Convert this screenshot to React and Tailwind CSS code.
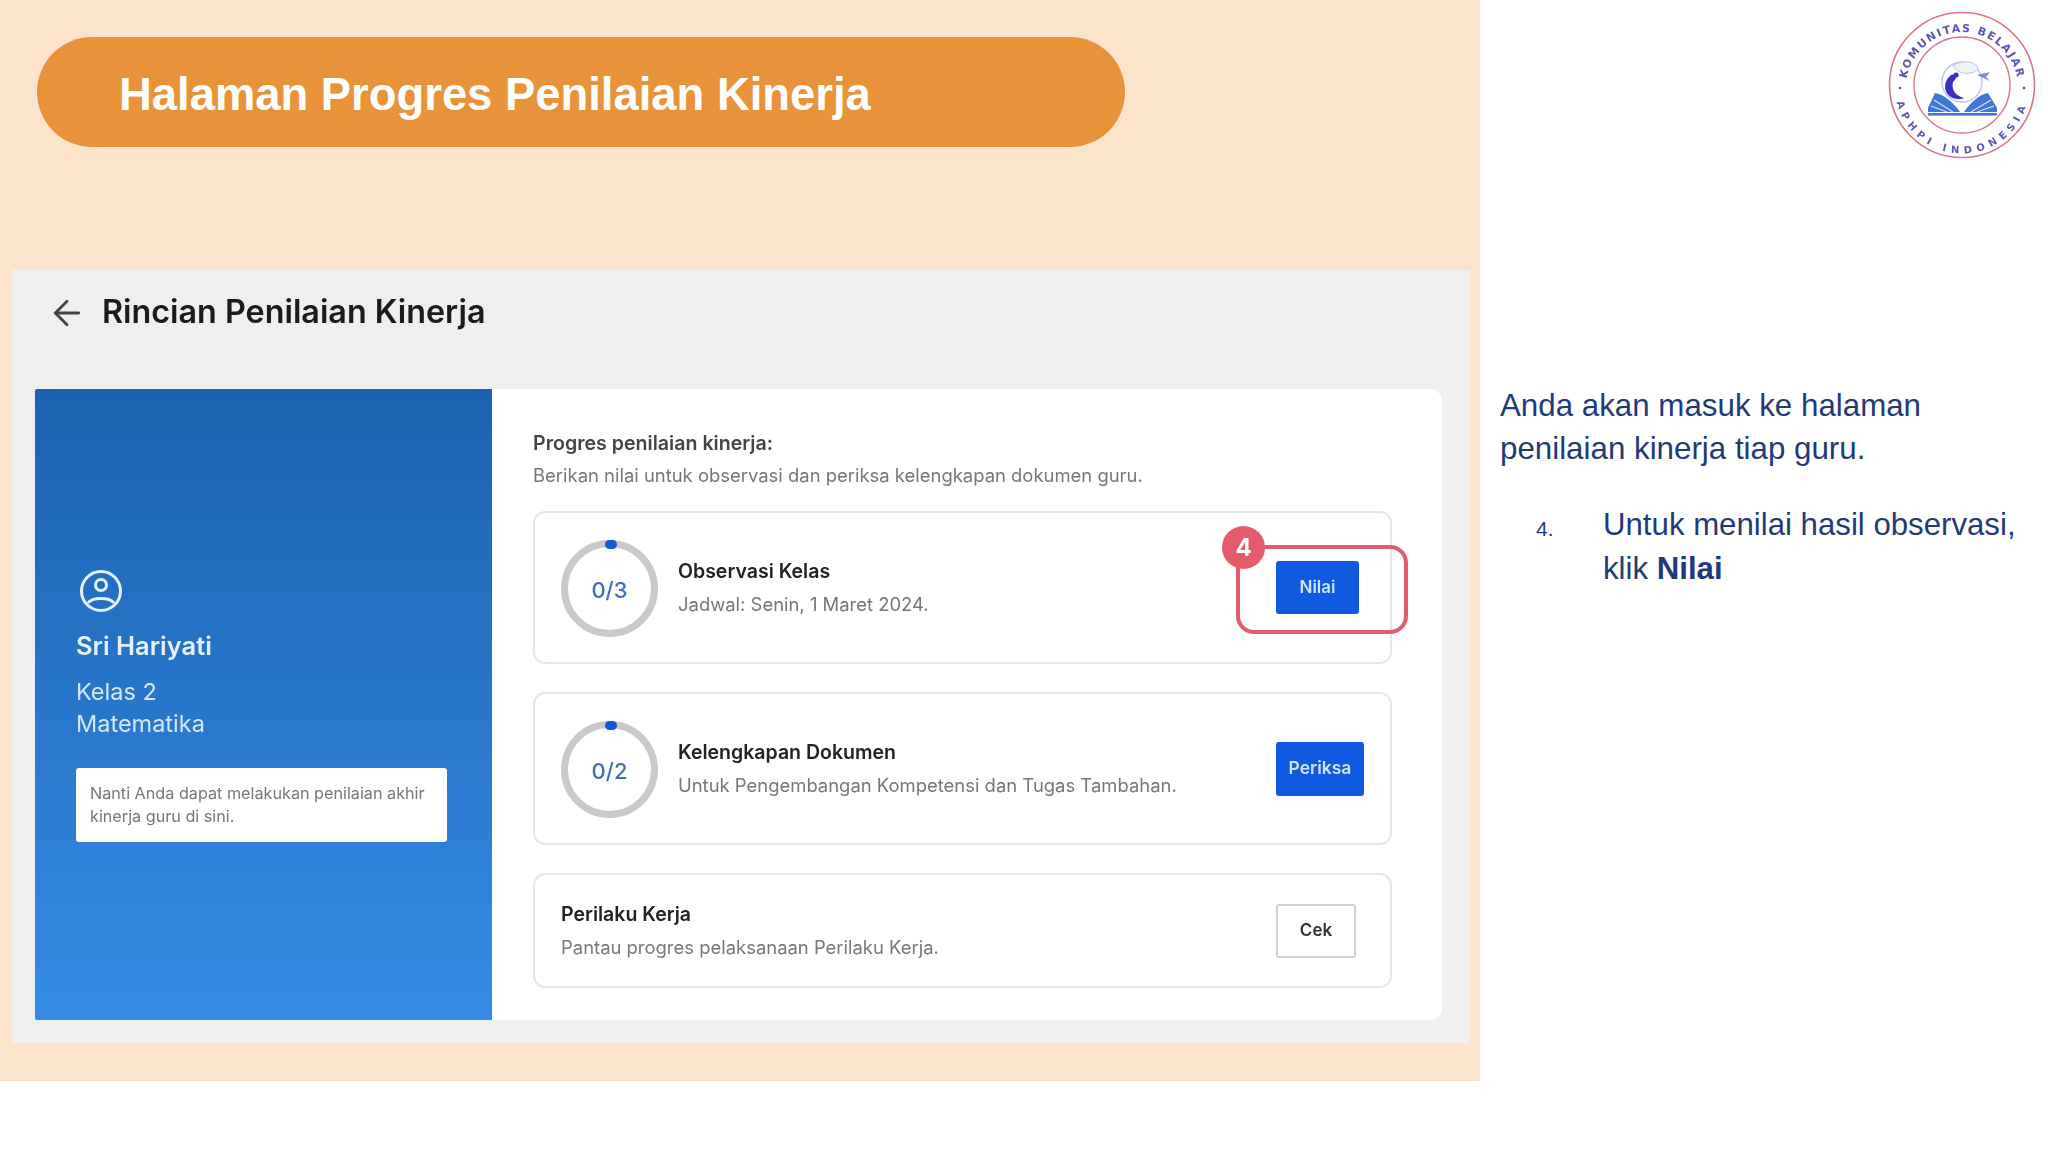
import { ArrowLeft } from 'lucide-react';

function Logo() {
  return (
    <svg width="150" height="150" viewBox="0 0 150 150" className="blur-[0.6px]">
      <defs>
        <path id="ringTop" d="M19 78 A56 56 0 0 1 131 78" fill="none" />
        <path id="ringBottom" d="M9 88 A67 67 0 0 0 141 88" fill="none" />
      </defs>
      <circle cx="75" cy="75" r="72.5" fill="#fff" stroke="#d9738a" strokeWidth="1.6" />
      <circle cx="75" cy="75" r="48" fill="#fff" stroke="#d9738a" strokeWidth="1.4" />
      <text fontFamily="'DejaVu Sans', sans-serif" fontSize="11" fontWeight="700" fill="#5a55b5" letterSpacing="1.6">
        <textPath href="#ringTop" startOffset="50%" textAnchor="middle">KOMUNITAS BELAJAR</textPath>
      </text>
      <text fontFamily="'DejaVu Sans', sans-serif" fontSize="10" fontWeight="700" fill="#5a55b5" letterSpacing="5.2">
        <textPath href="#ringBottom" startOffset="50%" textAnchor="middle">APHPI INDONESIA</textPath>
      </text>
      <circle cx="13" cy="78" r="1.3" fill="#5a55b5" />
      <circle cx="137" cy="78" r="1.3" fill="#5a55b5" />
      {/* globe and fish */}
      <circle cx="75" cy="72" r="20" fill="none" stroke="#b9c8e8" strokeWidth="1.4" />
      <path d="M66 56 C72 50 88 50 91 58 C88 65 72 66 66 56Z" fill="#eef2fb" stroke="#b9c8e8" strokeWidth="1" />
      <path d="M90 65 L103 62 L99 67 L103 71 Z" fill="#7e90cc" />
      <path d="M63 66 C56 72 56 84 66 88 C71 90 75 89 77 88 C69 86 64 80 66 72 C68 70 70 68 68 66 C66 64 65 64 63 66Z" fill="#3a2fc0" />
      <circle cx="69" cy="65" r="2.6" fill="#3a2fc0" />
      {/* open book */}
      <path d="M41 98 L48 83 C56 84 66 92 73 102 L41 102Z" fill="#3f76d8" />
      <path d="M110 98 L101 83 C93 84 84 92 77 102 L110 102Z" fill="#3f76d8" />
      <path d="M47 90 L66 102 M44 96 L60 102 M104 90 L84 102 M107 96 L90 102" stroke="#dce6fa" strokeWidth="1.1" />
      <rect x="41" y="103" width="69" height="2.6" fill="#3f76d8" />
    </svg>
  );
}

function Ring({ label }) {
  return (
    <div className="relative w-[97px] h-[97px] shrink-0 mt-[2px] rounded-full border-[7px] border-[#c9c9c9] flex items-center justify-center">
      <span className="absolute top-[-7px] left-[37px] w-[12px] h-[9px] rounded-full bg-[#1558d6]"></span>
      <span className="mt-[3px] text-[22px] text-[#3f6fb5] font-medium">{label}</span>
    </div>
  );
}

function CardText({ title, desc }) {
  return (
    <div className="flex-1">
      <p className="text-[19.5px] leading-[26px] font-semibold text-[#222]">{title}</p>
      <p className="mt-[7px] text-[18.45px] leading-[26px] text-[#777]">{desc}</p>
    </div>
  );
}

export default function App() {
  return (
    <div className="w-[2048px] h-[1152px] bg-white flex items-start overflow-hidden font-['Liberation_Sans',sans-serif]">
      <div className="w-[1480px] h-[1081px] shrink-0 bg-[#fce4cc] pt-[37px] pl-[12px]">
        <div className="ml-[25px] w-[1088px] h-[110px] rounded-full bg-[#e8933a] flex items-center pl-[82px]">
          <h1 className="text-[45.4px] font-bold text-white mt-[7px]">Halaman Progres Penilaian Kinerja</h1>
        </div>

        <div className="mt-[123px] w-[1458px] h-[773px] bg-[#efefef] font-['Inter',sans-serif] blur-[0.5px]">
          <div className="h-[82px] flex items-center pl-[35px] pt-[3px] gap-[15px]">
            <ArrowLeft size={40} strokeWidth={1.7} className="text-[#444]" />
            <h2 className="text-[32.3px] font-semibold text-[#1b1b1b]">Rincian Penilaian Kinerja</h2>
          </div>

          <div className="mt-[37px] ml-[23px] w-[1407px] h-[631px] flex">
            <div className="w-[457px] shrink-0 bg-gradient-to-b from-[#1c62b0] to-[#348ce6] pl-[41px] pt-[180px] rounded-l-[2px]">
              <svg width="44" height="44" viewBox="0 0 44 44" fill="none" stroke="#e6f1fc" strokeWidth="3" className="ml-[3px]">
                <circle cx="22" cy="22" r="19.5" />
                <circle cx="22" cy="16" r="5.5" />
                <path d="M9 34 C13 28 31 28 35 34" />
              </svg>
              <p className="mt-[17px] text-[25.5px] leading-[32px] font-semibold text-[#e6f1fc]">Sri Hariyati</p>
              <p className="mt-[14px] text-[23.5px] leading-[32px] text-[#d5e8fa]">Kelas 2</p>
              <p className="text-[23.5px] leading-[32px] text-[#d5e8fa]">Matematika</p>
              <div className="mt-[28px] w-[371px] h-[74px] bg-white rounded-[3px] pl-[14px] pt-[14px] text-[16.2px] leading-[23px] text-[#777]">
                <p>Nanti Anda dapat melakukan penilaian akhir</p>
                <p>kinerja guru di sini.</p>
              </div>
            </div>

            <div className="flex-1 bg-white rounded-r-xl pl-[41px] pt-[40px]">
              <p className="text-[19.6px] leading-[28px] font-semibold text-[#444]">Progres penilaian kinerja:</p>
              <p className="mt-[4px] text-[18.45px] leading-[28px] text-[#777]">Berikan nilai untuk observasi dan periksa kelengkapan dokumen guru.</p>

              <div className="mt-[22px] w-[859px] flex flex-col gap-[28px]">
                <div className="relative h-[153px] rounded-xl border-2 border-[#e7e7e7] flex items-center pl-[26px] pr-[26px] gap-[20px]">
                  <Ring label="0/3" />
                  <CardText title="Observasi Kelas" desc="Jadwal: Senin, 1 Maret 2024." />
                  <button className="w-[83px] h-[53px] mr-[5px] rounded-[3px] bg-[#0f5ae0] text-[17px] font-semibold text-[#cfe2ff]">Nilai</button>
                  <div className="absolute left-[701px] top-[32px] w-[172px] h-[89px] rounded-[18px] border-[4px] border-[#e45c6c]"></div>
                  <div className="absolute left-[687px] top-[13px] w-[43px] h-[43px] rounded-full bg-[#e45c6c] flex items-center justify-center text-[24px] font-bold text-white">4</div>
                </div>

                <div className="h-[153px] rounded-xl border-2 border-[#e7e7e7] flex items-center pl-[26px] pr-[26px] gap-[20px]">
                  <Ring label="0/2" />
                  <CardText title="Kelengkapan Dokumen" desc="Untuk Pengembangan Kompetensi dan Tugas Tambahan." />
                  <button className="w-[88px] h-[54px] rounded-[3px] bg-[#0f5ae0] text-[17.5px] font-semibold text-[#cfe2ff]">Periksa</button>
                </div>

                <div className="h-[115px] rounded-xl border-2 border-[#e7e7e7] flex items-center pl-[26px] pr-[34px]">
                  <CardText title="Perilaku Kerja" desc="Pantau progres pelaksanaan Perilaku Kerja." />
                  <button className="w-[80px] h-[54px] rounded-[3px] border-2 border-[#cfcfcf] bg-white text-[17px] font-semibold text-[#333]">Cek</button>
                </div>
              </div>
            </div>
          </div>
        </div>
      </div>

      <div className="flex-1 pl-[20px] text-[#1f3a7a]">
        <div className="h-[384px] flex justify-end items-start pt-[10px] pr-[11px]">
          <Logo />
        </div>
        <p className="text-[31.3px] leading-[43px]">Anda akan masuk ke halaman<br />penilaian kinerja tiap guru.</p>
        <div className="mt-[33px] flex">
          <span className="w-[103px] pl-[36px] pt-[8px] text-[21px] leading-[35px] shrink-0">4.</span>
          <p className="text-[31.2px] leading-[44px]">Untuk menilai hasil observasi,<br />klik <b>Nilai</b></p>
        </div>
      </div>
    </div>
  );
}
